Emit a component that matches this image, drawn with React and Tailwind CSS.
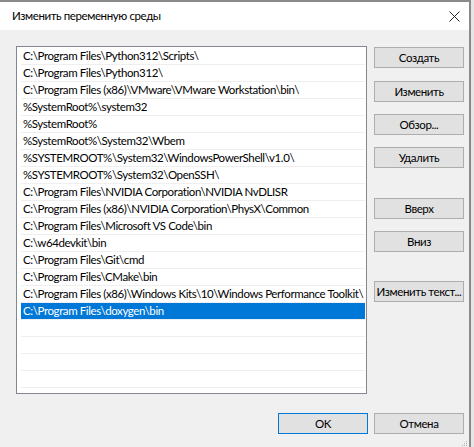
const paths = [
  'C:\\Program Files\\Python312\\Scripts\\',
  'C:\\Program Files\\Python312\\',
  'C:\\Program Files (x86)\\VMware\\VMware Workstation\\bin\\',
  '%SystemRoot%\\system32',
  '%SystemRoot%',
  '%SystemRoot%\\System32\\Wbem',
  '%SYSTEMROOT%\\System32\\WindowsPowerShell\\v1.0\\',
  '%SYSTEMROOT%\\System32\\OpenSSH\\',
  'C:\\Program Files\\NVIDIA Corporation\\NVIDIA NvDLISR',
  'C:\\Program Files (x86)\\NVIDIA Corporation\\PhysX\\Common',
  'C:\\Program Files\\Microsoft VS Code\\bin',
  'C:\\w64devkit\\bin',
  'C:\\Program Files\\Git\\cmd',
  'C:\\Program Files\\CMake\\bin',
  'C:\\Program Files (x86)\\Windows Kits\\10\\Windows Performance Toolkit\\',
  'C:\\Program Files\\doxygen\\bin',
]

export default function App() {
  return (
    <div className="w-[474px] h-[447px] overflow-hidden bg-[#d4d4d4] flex font-['Lato','Liberation_Sans',sans-serif] text-[11.5px] tracking-[-0.4px] text-black">
      {/* dialog */}
      <div className="w-[471px] h-full flex flex-col border-t-[2px] border-r-[2px] border-[#8a8a8a]">
        <div className="h-[28px] bg-white flex items-center justify-between pl-[12px] pr-[9px] shrink-0">
          <span className="leading-none">Изменить переменную среды</span>
          <svg width="11" height="11" viewBox="0 0 11 11" className="text-[#222]">
            <path d="M0.5 0.5 L10.5 10.5 M10.5 0.5 L0.5 10.5" stroke="currentColor" strokeWidth="1" />
          </svg>
        </div>

        <div className="flex-1 bg-[#f0f0f0] relative">
          <div className="flex pl-[16px] pt-[16px]">
            {/* list box */}
            <div className="w-[351px] h-[348px] bg-white border border-[#828790] pt-[1px] pl-[4px] pr-[1px] overflow-hidden">
              {paths.map((p, i) => (
                <Row key={i} text={p} selected={i === paths.length - 1} />
              ))}
              {[0, 1, 2, 3].map((i) => (
                <Row key={'e' + i} text="" />
              ))}
            </div>

            <div className="ml-[7px] pt-[1px] flex flex-col">
              <Btn>Создать</Btn>
              <Btn className="mt-[13px]">Изменить</Btn>
              <Btn className="mt-[12px]">Обзор...</Btn>
              <Btn className="mt-[12px]">Удалить</Btn>
              <Btn className="mt-[30px]">Вверх</Btn>
              <Btn className="mt-[12px]">Вниз</Btn>
              <Btn className="mt-[29px]">Изменить текст...</Btn>
            </div>
          </div>

          <div className="flex justify-end gap-[6px] pr-[5px] mt-[19px]">
            <Btn primary>OK</Btn>
            <Btn>Отмена</Btn>
          </div>

          {/* size grip */}
          <div className="absolute right-[2px] bottom-[1px] grid grid-cols-3 gap-[1px]">
            <span className="w-[1px] h-[1px]" />
            <span className="w-[1px] h-[1px]" />
            <span className="w-[1px] h-[1px] bg-[#b0b0b0]" />
            <span className="w-[1px] h-[1px]" />
            <span className="w-[1px] h-[1px] bg-[#b0b0b0]" />
            <span className="w-[1px] h-[1px] bg-[#b0b0b0]" />
            <span className="w-[1px] h-[1px] bg-[#b0b0b0]" />
            <span className="w-[1px] h-[1px] bg-[#b0b0b0]" />
            <span className="w-[1px] h-[1px] bg-[#b0b0b0]" />
          </div>
        </div>
      </div>
      <div className="flex-1 bg-[#e6e6e6]" />
    </div>
  )
}

function Row({ text, selected }) {
  return (
    <div
      className={`h-[17px] border-b border-[#efefef] px-[2px] leading-[16px] whitespace-nowrap ${
        selected ? 'bg-[#0078d7] text-white' : ''
      }`}
    >
      {text}
    </div>
  )
}

function Btn({ children, primary, className = '' }) {
  return (
    <button
      className={`w-[90px] h-[21px] bg-[#e1e1e1] border ${
        primary ? 'border-[#0078d7]' : 'border-[#adadad]'
      } leading-none whitespace-nowrap flex items-center justify-center ${className}`}
    >
      {children}
    </button>
  )
}
